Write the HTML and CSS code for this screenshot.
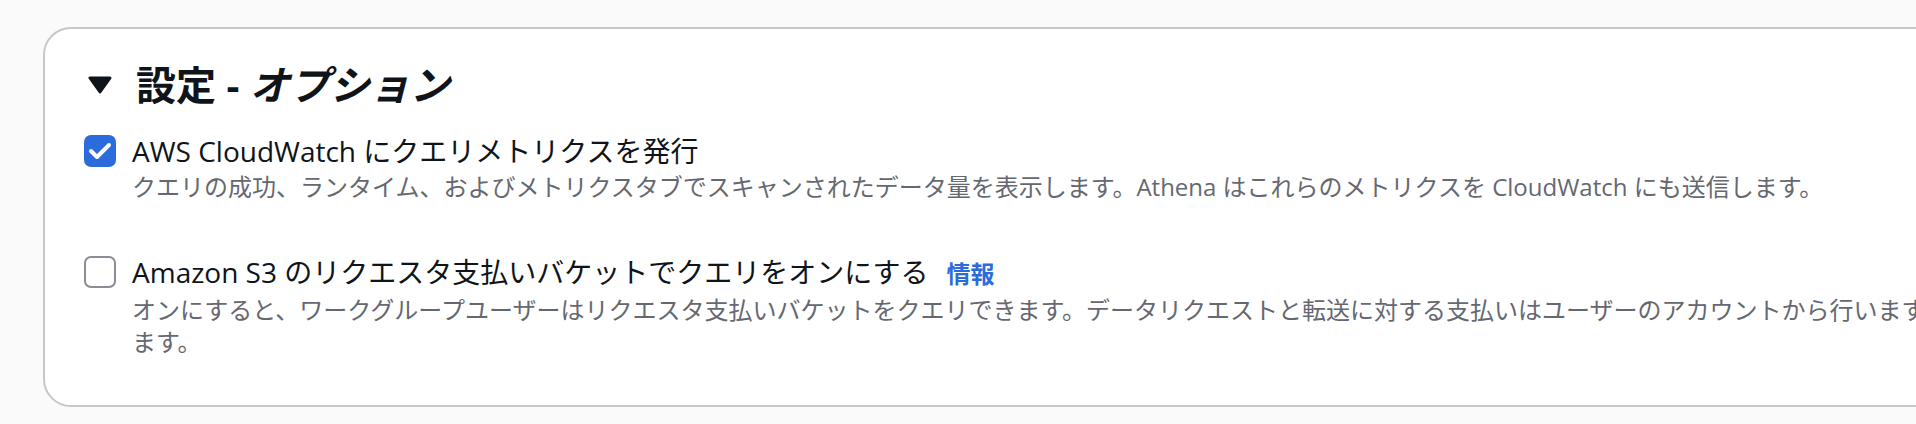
FILE: index.html
```html
<!DOCTYPE html>
<html lang="ja">
<head>
  <meta charset="UTF-8" />
  <title>設定 - オプション</title>
  <link rel="stylesheet" href="styles.css">
</head>
<body>

  <div class="page">
    <section class="card">

      <!-- Header -->
      <h2 class="card-header">
        <span class="caret">
          <svg width="24" height="18" viewBox="0 0 24 18">
            <polygon points="2,2 22,2 12,16" fill="#0f141a" stroke="#0f141a" stroke-width="3" stroke-linejoin="round" />
          </svg>
        </span>
        <span>設定 - <i>オプション</i></span>
      </h2>

      <!-- Options -->
      <div class="option">
        <span class="checkbox checked">
          <svg width="32" height="32" viewBox="0 0 16 16">
            <polyline points="3.5,8 6.5,11 12.5,5" fill="none" stroke="#fff" stroke-width="2" stroke-linecap="round" stroke-linejoin="round" />
          </svg>
        </span>
        <div class="option-text">
          <div class="label">AWS CloudWatch にクエリメトリクスを発行</div>
          <div class="desc">クエリの成功、ランタイム、およびメトリクスタブでスキャンされたデータ量を表示します。Athena はこれらのメトリクスを CloudWatch にも送信します。</div>
        </div>
      </div>

      <div class="option">
        <span class="checkbox"></span>
        <div class="option-text">
          <div class="label">Amazon S3 のリクエスタ支払いバケットでクエリをオンにする<a class="info" href="#">情報</a></div>
          <div class="desc">オンにすると、ワークグループユーザーはリクエスタ支払いバケットをクエリできます。データリクエストと転送に対する支払いはユーザーのアカウントから行います。料金が発生します。</div>
        </div>
      </div>

    </section>
  </div>

</body>
</html>
```

FILE: styles.css
```css
:root {
  --bg: #fafafa;
  --card: #ffffff;
  --border: #c6c6cd;
  --text: #0f141a;
  --muted: #656871;
  --blue: #2c6bdb;
}

* {
  box-sizing: border-box;
}

body {
  margin: 0;
  background: var(--bg);
  color: var(--text);
  font-family: 'Open Sans', 'Noto Sans CJK JP', sans-serif;
  overflow: hidden;
}

.page {
  padding: 27px 0 0 43px;
}

.card {
  width: 2056px;
  background: var(--card);
  border: 2px solid var(--border);
  border-radius: 28px;
  padding: 32px 0 47px 39px;
}

.card-header {
  display: flex;
  align-items: center;
  gap: 20px;
  margin: 0 0 22px;
  font-size: 40px;
  line-height: 48px;
  font-weight: 700;
}

.card-header i {
  font-style: italic;
}

.caret {
  width: 32px;
  height: 32px;
  display: flex;
  align-items: center;
  justify-content: center;
}

.caret svg {
  display: block;
}

.option {
  display: flex;
  align-items: flex-start;
  gap: 16px;
}

.option + .option {
  margin-top: 49px;
}

.checkbox {
  flex: none;
  width: 32px;
  height: 32px;
  margin-top: 4px;
  border: 2px solid #8c8c94;
  border-radius: 7px;
  background: #fff;
}

.checkbox.checked {
  border: none;
  background: var(--blue);
}

.checkbox svg {
  display: block;
}

.option-text {
  flex: 1;
}

.label {
  font-size: 28px;
  line-height: 40px;
}

.desc {
  font-size: 24px;
  line-height: 32px;
  color: var(--muted);
}

.info {
  margin-left: 18px;
  font-size: 24px;
  font-weight: 700;
  color: var(--blue);
  text-decoration: none;
}
```
